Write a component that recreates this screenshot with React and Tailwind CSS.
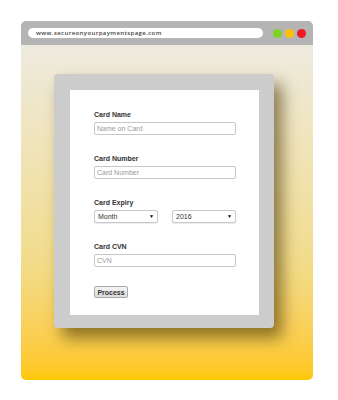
import React from 'react';

const Field = ({ label, placeholder }) => (
  <div className="flex flex-col">
    <span className="text-[7px] leading-[8px] font-bold text-[#333]">{label}</span>
    <div className="mt-[3px] w-[142px] h-[13px] border border-[#c8c8c8] rounded-[2px] bg-white flex items-center px-[2px]">
      <span className="text-[7px] leading-none text-[#9a9a9a]">{placeholder}</span>
    </div>
  </div>
);

const Select = ({ value }) => (
  <div className="w-[64px] h-[13px] border border-[#c8c8c8] rounded-[2px] bg-white flex items-center justify-between px-[3px] shadow-[0_1px_1px_rgba(0,0,0,0.08)]">
    <span className="text-[7px] leading-none text-[#333]">{value}</span>
    <span className="text-[5px] leading-none text-black">▼</span>
  </div>
);

export default function App() {
  return (
    <div className="w-[338px] h-[400px] bg-white pt-[21px] pl-[21px] font-['Liberation_Sans',Arial,sans-serif]">
      <div className="w-[292px] h-[359px] rounded-[5px] overflow-hidden flex flex-col">
        {/* barre du navigateur */}
        <div className="h-[24px] bg-[#b4b4b4] flex items-center pl-[7px] pr-[7px] gap-[7px]">
          <div className="w-[239px] h-[10px] bg-white rounded-full flex items-center pl-[8px]">
            <span className="font-['Open_Sans',sans-serif] text-[6px] leading-none font-semibold tracking-[0.4px] text-[#444]">
              www.secureonyourpaymentspage.com
            </span>
          </div>
          <div className="flex gap-[3px] ml-[3px]">
            <span className="w-[9px] h-[9px] rounded-full bg-[#7ed321]" />
            <span className="w-[9px] h-[9px] rounded-full bg-[#ffc107]" />
            <span className="w-[9px] h-[9px] rounded-full bg-[#ef1b24]" />
          </div>
        </div>

        {/* page */}
        <div className="flex-1 bg-gradient-to-b from-[#eeeadf] via-[#f2dc8a] via-65% to-[#ffc700] pt-[29px] pl-[33px]">
          <div className="w-[220px] h-[254px] bg-[#cccccc] rounded-[4px] pt-[16px] pl-[16px] shadow-[8px_10px_16px_rgba(70,50,0,0.6)]">
            <div className="w-[189px] h-[225px] bg-white pl-[24px] pt-[21px] flex flex-col gap-[20px]">
              <Field label="Card Name" placeholder="Name on Card" />
              <Field label="Card Number" placeholder="Card Number" />
              <div className="flex flex-col">
                <span className="text-[7px] leading-[8px] font-bold text-[#333]">Card Expiry</span>
                <div className="mt-[3px] flex gap-[14px]">
                  <Select value="Month" />
                  <Select value="2016" />
                </div>
              </div>
              <Field label="Card CVN" placeholder="CVN" />
              <button className="-mt-[1px] w-[34px] h-[12px] border border-[#a9a9a9] rounded-[2px] bg-gradient-to-b from-[#f4f4f4] to-[#dcdcdc] flex items-center justify-center">
                <span className="text-[7px] leading-none font-bold text-[#333]">Process</span>
              </button>
            </div>
          </div>
        </div>
      </div>
    </div>
  );
}
